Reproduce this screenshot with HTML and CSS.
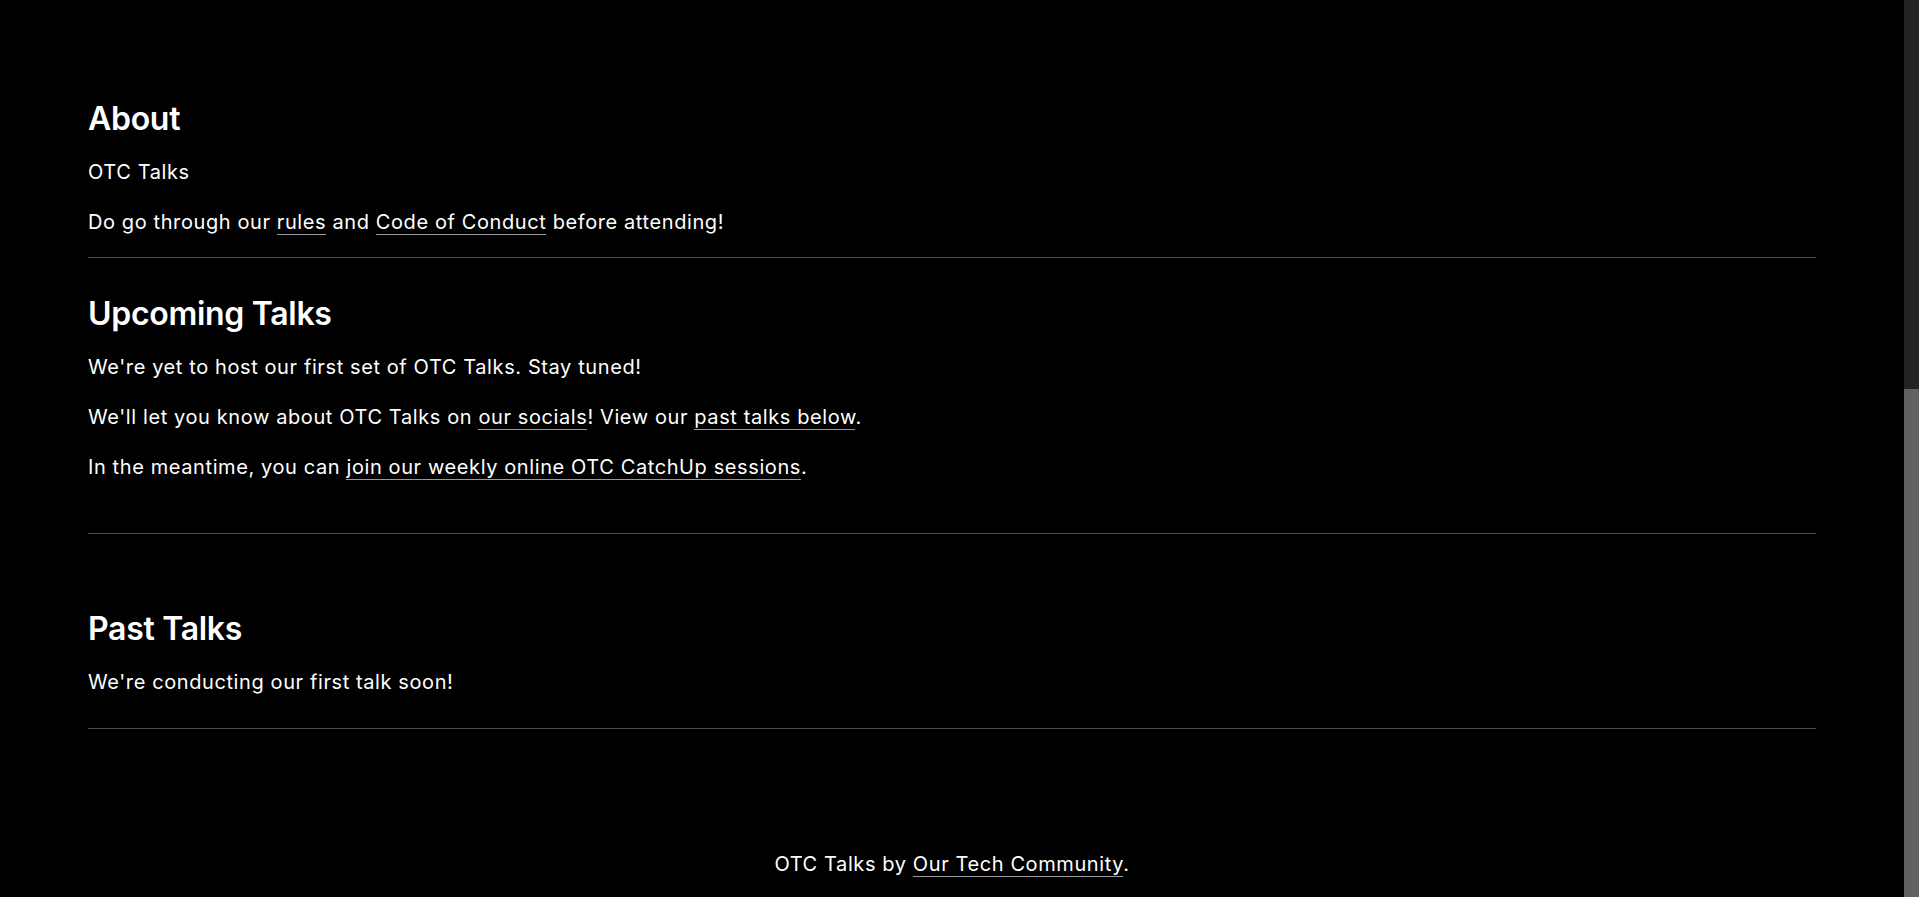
FILE: index.html
```html
<!DOCTYPE html>
<html lang="en">
<head>
<meta charset="utf-8">
<title>OTC Talks</title>
<link rel="stylesheet" href="styles.css">
</head>
<body>
<div class="window">
  <div class="page">
    <main class="content">
      <section class="section about">
        <h2 class="title">About</h2>
        <p class="text">OTC Talks</p>
        <p class="text">Do go through our <a class="link" href="#">rules</a> and <a class="link" href="#">Code of Conduct</a> before attending!</p>
      </section>
      <hr class="rule">
      <section class="section upcoming">
        <h2 class="title">Upcoming Talks</h2>
        <p class="text">We're yet to host our first set of OTC Talks. Stay tuned!</p>
        <p class="text">We'll let you know about OTC Talks on <a class="link" href="#">our socials</a>! View our <a class="link" href="#">past talks below</a>.</p>
        <p class="text">In the meantime, you can <a class="link" href="#">join our weekly online OTC CatchUp sessions</a>.</p>
      </section>
      <hr class="rule">
      <section class="section past">
        <h2 class="title">Past Talks</h2>
        <p class="text">We're conducting our first talk soon!</p>
      </section>
      <hr class="rule">
    </main>
    <footer class="footer">
      <p class="text">OTC Talks by <a class="link" href="#">Our Tech Community</a>.</p>
    </footer>
  </div>
  <div class="scrollbar" aria-hidden="true">
    <div class="scrollbar-track"></div>
    <div class="scrollbar-thumb"></div>
  </div>
</div>
</body>
</html>
```

FILE: styles.css
```css
html, body {
  margin: 0;
  padding: 0;
  height: 100%;
  background: #000;
  overflow: hidden;
}

body {
  font-family: Inter, "Open Sans", "Liberation Sans", sans-serif;
  color: #fff;
}

.window {
  display: flex;
  height: 100vh;
}

.page {
  flex: 1;
  display: flex;
  flex-direction: column;
  padding-top: 97px;
  min-width: 0;
}

.scrollbar {
  width: 15px;
  display: flex;
  flex-direction: column;
  background: #232323;
}

.scrollbar-track {
  height: 389px;
}

.scrollbar-thumb {
  flex: 1;
  background: #616161;
  border-radius: 1px 1px 0 0;
}

.content {
  padding: 0 88px;
}

.section {
  display: flex;
  flex-direction: column;
  gap: 20px;
}

.about {
  padding-bottom: 20px;
}

.upcoming {
  padding-top: 34px;
  padding-bottom: 51px;
}

.past {
  padding-top: 73px;
  padding-bottom: 31px;
}

.title {
  margin: 2px 0 -2px;
  font-size: 32px;
  line-height: 40px;
  font-weight: 600;
  letter-spacing: -0.3px;
}

.text {
  margin: 0;
  font-size: 20px;
  line-height: 30px;
  font-weight: 400;
  letter-spacing: 0.6px;
}

.rule {
  margin: 0;
  border: 0;
  border-top: 1px solid #4d4d4d;
  height: 0;
}

.link {
  color: #fff;
  text-decoration: none;
  border-bottom: 1px solid #9a9a9a;
}

.footer {
  padding: 120px 0 17px;
  text-align: center;
}
```
